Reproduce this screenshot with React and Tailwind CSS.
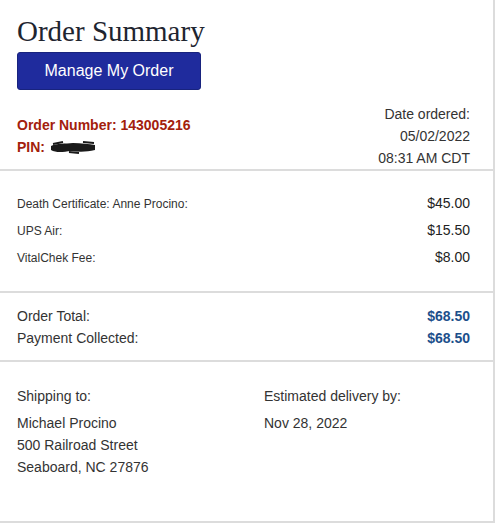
import React from "react";

const items = [
  { label: "Death Certificate: Anne Procino:", amount: "$45.00" },
  { label: "UPS Air:", amount: "$15.50" },
  { label: "VitalChek Fee:", amount: "$8.00" },
];

const totals = [
  { label: "Order Total:", amount: "$68.50" },
  { label: "Payment Collected:", amount: "$68.50" },
];

// black marker scribble hiding the PIN
const Redacted = () => (
  <svg width="48" height="13" viewBox="0 0 48 13" className="ml-[4px]">
    <path d="M2 5 C8 2 16 3 24 2 C32 2 40 3 46 4 L46 9 C38 11 30 11 22 10 C14 11 7 12 2 9 Z" fill="#1a1a1a" />
    <path d="M4 3 L14 1 M20 11 L30 12 M34 1 L45 2" stroke="#1a1a1a" strokeWidth="2" />
  </svg>
);

const App = () => {
  return (
    <div className="w-[500px] h-[523px] bg-white" style={{ fontFamily: "'Liberation Sans', Arial, sans-serif" }}>
      <div className="w-[495px] h-[523px] flex flex-col border-r-2 border-b-2 border-[#dcdcdc] text-[#2a2a2a]">
        {/* header */}
        <div className="pl-[17px] pr-[23px]">
          <h1 className="pt-[14px] text-[29px] leading-[34px] text-[#1e2530]" style={{ fontFamily: "'Liberation Serif', 'Times New Roman', serif" }}>
            Order Summary
          </h1>
          <button className="mt-[4px] h-[38px] w-[184px] rounded-[3px] bg-[#1f2b9d] text-white text-[16px] border border-[#18237e]">
            Manage My Order
          </button>
          <div className="mt-[13px] flex items-center justify-between">
            <div className="text-[14px] leading-[22px] font-bold text-[#a3200c]">
              <div>Order Number: 143005216</div>
              <div className="flex items-center">
                PIN: <Redacted />
              </div>
            </div>
            <div className="text-[14px] leading-[22px] text-right text-[#333]">
              <div>Date ordered:</div>
              <div>05/02/2022</div>
              <div>08:31 AM CDT</div>
            </div>
          </div>
        </div>

        {/* line items */}
        <div className="border-t-2 border-[#dcdcdc] pl-[17px] pr-[23px] pt-[19px] pb-[20px]">
          {items.map((item) => (
            <div key={item.label} className="h-[27px] flex items-center justify-between">
              <span className="text-[12px] text-[#333]">{item.label}</span>
              <span className="text-[14px] text-[#222]">{item.amount}</span>
            </div>
          ))}
        </div>

        {/* totals */}
        <div className="border-t-2 border-[#dcdcdc] pl-[17px] pr-[23px] pt-[12px] pb-[11px]">
          {totals.map((row) => (
            <div key={row.label} className="h-[22px] flex items-center justify-between text-[14px]">
              <span className="text-[#333]">{row.label}</span>
              <span className="font-bold text-[#1d4f8b]">{row.amount}</span>
            </div>
          ))}
        </div>

        {/* shipping */}
        <div className="flex-1 border-t-2 border-[#dcdcdc] pl-[17px] pr-[23px] pt-[23px] flex text-[14px] leading-[22px] text-[#333]">
          <div className="w-[247px]">
            <div className="mb-[5px]">Shipping to:</div>
            <div>Michael Procino</div>
            <div>500 Railroad Street</div>
            <div>Seaboard, NC 27876</div>
          </div>
          <div>
            <div className="mb-[5px]">Estimated delivery by:</div>
            <div>Nov 28, 2022</div>
          </div>
        </div>
      </div>
    </div>
  );
};

export default App;
